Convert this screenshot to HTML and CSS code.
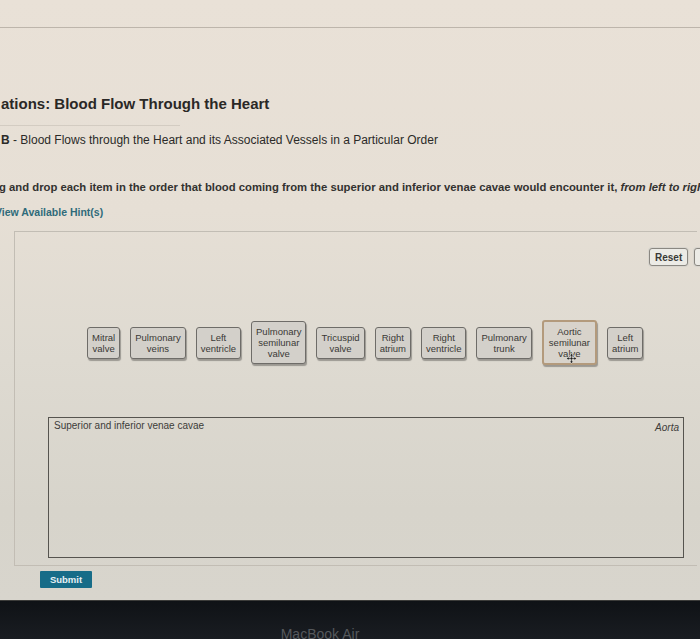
FILE: index.html
```html
<!DOCTYPE html>
<html>
<head>
<meta charset="utf-8">
<link rel="stylesheet" href="styles.css">
</head>
<body>
<div class="screen">
  <div class="topband"></div>
  <h1 class="title">ations: Blood Flow Through the Heart</h1>
  <div class="rule"></div>
  <p class="part"><b>B</b> - Blood Flows through the Heart and its Associated Vessels in a Particular Order</p>
  <p class="instr">g and drop each item in the order that blood coming from the superior and inferior venae cavae would encounter it, <i>from left to right</i></p>
  <p class="hint">View Available Hint(s)</p>
  <div class="panel">
    <div class="toolbar">
      <button class="tbtn">Reset</button>
      <button class="tbtn">Help</button>
    </div>
    <div class="tiles">
      <div class="tile">Mitral<br>valve</div>
      <div class="tile">Pulmonary<br>veins</div>
      <div class="tile">Left<br>ventricle</div>
      <div class="tile">Pulmonary<br>semilunar<br>valve</div>
      <div class="tile">Tricuspid<br>valve</div>
      <div class="tile">Right<br>atrium</div>
      <div class="tile">Right<br>ventricle</div>
      <div class="tile">Pulmonary<br>trunk</div>
      <div class="tile active">Aortic<br>semilunar<br>valve<svg class="cursor" width="11" height="11" viewBox="0 0 11 11"><path d="M5.5 0.5 L3.5 2.8 H4.8 V4.8 H2.8 V3.5 L0.5 5.5 L2.8 7.5 V6.2 H4.8 V8.2 H3.5 L5.5 10.5 L7.5 8.2 H6.2 V6.2 H8.2 V7.5 L10.5 5.5 L8.2 3.5 V4.8 H6.2 V2.8 H7.5 Z" fill="#1c1c1c" stroke="#f0eee8" stroke-width="0.6"/></svg></div>
      <div class="tile">Left<br>atrium</div>
    </div>
    <div class="dropzone">
      <span class="start">Superior and inferior venae cavae</span>
      <span class="end">Aorta</span>
    </div>
  </div>
  <button class="submit">Submit</button>
</div>
<div class="bezel"><span class="brand">MacBook Air</span></div>
</body>
</html>
```
FILE: styles.css
```css
html, body {
  margin: 0;
  padding: 0;
  overflow: hidden;
  width: 700px;
  height: 639px;
}
body {
  font-family: "Liberation Sans", Arial, sans-serif;
  color: #2b2a28;
  background: #15181c;
}
.screen {
  height: 600px;
  background: linear-gradient(180deg, #e9e1d7 0%, #e6dfd5 35%, #dedad1 60%, #d7d4cb 85%, #d8d5cd 100%);
  overflow: hidden;
  box-sizing: border-box;
}
.topband {
  height: 27px;
  border-bottom: 1px solid #bdb5ab;
}
.title {
  margin: 67px 0 0 1px;
  font-size: 15px;
  font-weight: bold;
  line-height: 18px;
  color: #2a2826;
}
.rule {
  margin-top: 12px;
  width: 180px;
  border-top: 1px solid #d3ccc2;
}
.part {
  margin: 7px 0 0 1px;
  font-size: 12px;
  line-height: 15px;
  color: #2b2a28;
}
.instr {
  margin: 32px 0 0 -1px;
  font-size: 11.3px;
  line-height: 14px;
  font-weight: bold;
  white-space: nowrap;
  color: #333230;
}
.instr i { font-weight: bold; }
.hint {
  margin: 11px 0 0 -5px;
  font-size: 10.5px;
  line-height: 14px;
  font-weight: bold;
  color: #2f6b7a;
}
.panel {
  margin: 12px 0 0 14px;
  width: 683px;
  height: 335px;
  border: 1px solid #c2bdb4;
  border-right: none;
  box-sizing: border-box;
  display: flex;
  flex-direction: column;
}
.toolbar {
  display: flex;
  gap: 6px;
  margin: 16px 0 0 634px;
}
.tbtn {
  font-family: "Liberation Sans", Arial, sans-serif;
  font-size: 10px;
  font-weight: bold;
  color: #3a3936;
  background: #ecebe6;
  border: 1px solid #8a8781;
  border-radius: 3px;
  height: 18px;
  padding: 0 5px;
  line-height: 15px;
  box-shadow: 0 0 0 1px #d8d5ce;
}
.tiles {
  display: flex;
  align-items: center;
  gap: 10px;
  margin: 54px 0 0 72px;
}
.tile {
  position: relative;
  font-size: 9.5px;
  line-height: 11px;
  text-align: center;
  color: #3a3936;
  background: #d3d0ca;
  border: 1px solid #6e6c68;
  border-radius: 3px;
  padding: 4px 4px;
  box-shadow: 1px 2px 1px rgba(0, 0, 0, 0.3);
}
.tile.active {
  border: 2px solid #b39a7c;
  background: #d8d3cb;
  padding: 4px 5px;
}
.cursor {
  position: absolute;
  left: 22px;
  top: 31px;
}
.dropzone {
  margin: 52px 0 0 33px;
  width: 636px;
  height: 141px;
  border: 1px solid #56544f;
  box-sizing: border-box;
  display: flex;
  justify-content: space-between;
  align-items: flex-start;
  padding: 2px 4px 0 5px;
  font-size: 10px;
  line-height: 12px;
  color: #3d3c39;
}
.end { font-style: italic; margin-top: 2px; }
.submit {
  display: block;
  margin: 5px 0 0 40px;
  font-family: "Liberation Sans", Arial, sans-serif;
  font-size: 9.5px;
  font-weight: bold;
  color: #e8f1f4;
  background: #176c88;
  border: none;
  border-radius: 1px;
  height: 17px;
  width: 52px;
  padding: 0;
}
.bezel {
  height: 39px;
  background: linear-gradient(180deg, #0f1216 0%, #1a1d22 100%);
  text-align: center;
  overflow: hidden;
  border-top: 1px solid #3c3c3a;
}
.brand {
  display: inline-block;
  margin: 25px 0 0 -60px;
  font-size: 14px;
  line-height: 16px;
  color: #55585c;
}
```
